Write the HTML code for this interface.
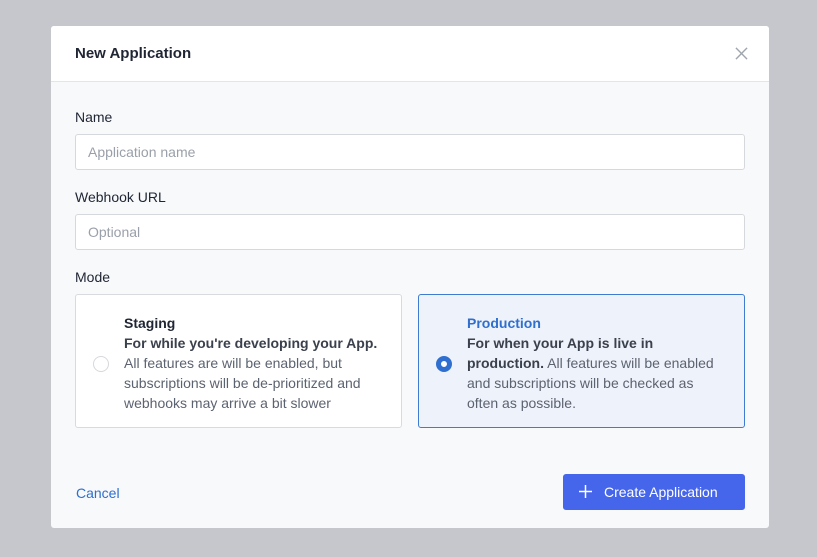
<!DOCTYPE html>
<html><head><style>
*{box-sizing:border-box;margin:0;padding:0}
body{width:817px;height:557px;background:#c5c7cd;font-family:"Liberation Sans",sans-serif;position:relative;overflow:hidden}
.m{position:absolute;left:51px;top:26px;width:718px;height:502px;background:#f8f9fb;border-radius:3px;overflow:hidden}
.h{height:56px;background:#fff;border-bottom:1px solid #e3e5e9;position:relative}
.h h1{position:absolute;left:24px;top:19px;font-size:15px;font-weight:bold;color:#1f2533}
.x{position:absolute;right:21px;top:21px}
.lbl{position:absolute;left:24px;font-size:14px;color:#1f2533}
.in{position:absolute;left:24px;width:670px;height:36px;background:#fff;border:1px solid #d5d8dd;border-radius:3px;font-size:14px;color:#9aa0a9;padding:9px 12px}
.c{position:absolute;top:268px;width:327px;height:134px;border:1px solid #d8dadf;background:#fff;border-radius:3px;font-size:14px;line-height:20px;color:#5c6370}
.c .t{position:absolute;left:48px;top:18px;width:270px}
.c b{color:#3a404c}
.r{position:absolute;left:17px;top:61px;width:16px;height:16px;border-radius:50%;border:1px solid #d5d8dd;background:#fff}
.sel{border-color:#3f7bd0;background:#eef2fa}
.sel .r{border:5px solid #2e6fcf;background:#fff}
.btn{position:absolute;left:512px;top:448px;width:182px;height:36px;background:#4565ea;border-radius:3px;color:#fff;font-size:14px;padding:10px 0 0 41px}
</style></head><body>
<div class="m">
<div class="h"><h1>New Application</h1>
<svg class="x" width="13" height="13" viewBox="0 0 14 14"><path d="M1 1L13 13M13 1L1 13" stroke="#a0a5ad" stroke-width="1.5"/></svg></div>
<div class="lbl" style="top:83px">Name</div>
<div class="in" style="top:108px">Application name</div>
<div class="lbl" style="top:163px">Webhook URL</div>
<div class="in" style="top:188px">Optional</div>
<div class="lbl" style="top:243px">Mode</div>
<div class="c" style="left:24px"><div class="r"></div><div class="t"><b style="color:#1f2533">Staging</b><br><b>For while you're developing your App.</b> All features are will be enabled, but subscriptions will be de-prioritized and webhooks may arrive a bit slower</div></div>
<div class="c sel" style="left:367px"><div class="r"></div><div class="t" style="width:250px"><b style="color:#2e6fcf">Production</b><br><b>For when your App is live in production.</b> All features will be enabled and subscriptions will be checked as often as possible.</div></div>
<div style="position:absolute;left:25px;top:459px;font-size:14px;color:#2e6fcf">Cancel</div>
<div class="btn"><svg style="position:absolute;left:16px;top:11px" width="13" height="13" viewBox="0 0 13 13"><path d="M6.5 0V13M0 6.5H13" stroke="#fff" stroke-width="1.5"/></svg>Create Application</div>
</div>
</body></html>
